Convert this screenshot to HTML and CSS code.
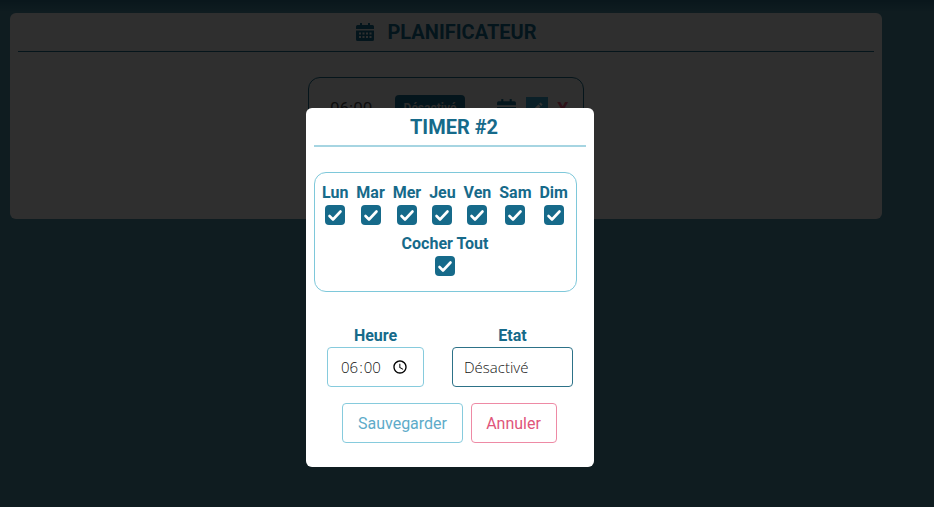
FILE: index.html
```html
<!DOCTYPE html>
<html lang="fr">
<head>
    <meta charset="UTF-8">
    <meta name="viewport" content="width=device-width, initial-scale=1.0">
    <title>Planificateur</title>
    <link rel="stylesheet" href="styles.css">
</head>
<body>

    <svg width="0" height="0" class="defs">
        <symbol id="calendar" viewBox="0 0 20 20">
            <path d="M1 7V4.500A1.500 1.500 0 0 1 2.500 3H5V1h2v2h6V1h2v2h2.500A1.500 1.500 0 0 1 19 4.500V7z"/>
            <path fill-rule="evenodd" d="M1 8.500h18v9A1.500 1.500 0 0 1 17.500 19h-15A1.500 1.500 0 0 1 1 17.500zM4 10.500v2h2v-2zM7.500 10.500v2h2v-2zM11 10.500v2h2v-2zM14.500 10.500v2h2v-2zM4 14v2h2v-2zM7.500 14v2h2v-2zM11 14v2h2v-2zM14.500 14v2h2v-2z"/>
        </symbol>
        <symbol id="check" viewBox="0 0 20 20">
            <path d="M4.500 11l3.500 3.500 7.500-8" fill="none" stroke="#fff" stroke-width="2.600" stroke-linecap="round" stroke-linejoin="round"/>
        </symbol>
    </svg>

    <div class="card">
        <h1 class="card-title">
            <svg class="title-icon"><use href="#calendar"/></svg>
            PLANIFICATEUR
        </h1>
        <div class="timer-row">
            <span class="timer-time">06:00</span>
            <span class="timer-badge">Désactivé</span>
            <div class="timer-actions">
                <svg class="timer-icon"><use href="#calendar"/></svg>
                <span class="timer-edit">
                    <svg viewBox="0 0 20 20" width="14" height="14"><path d="M3 17l1-4 8-8 3 3-8 8zM13 4l2-2 3 3-2 2z"/></svg>
                </span>
                <span class="timer-delete">X</span>
            </div>
        </div>
    </div>

    <div class="overlay">
        <div class="modal">
            <h2 class="modal-title">TIMER #2</h2>

            <div class="days-box">
                <div class="days">
                    <div class="day">Lun<span class="checkbox"><svg><use href="#check"/></svg></span></div>
                    <div class="day">Mar<span class="checkbox"><svg><use href="#check"/></svg></span></div>
                    <div class="day">Mer<span class="checkbox"><svg><use href="#check"/></svg></span></div>
                    <div class="day">Jeu<span class="checkbox"><svg><use href="#check"/></svg></span></div>
                    <div class="day">Ven<span class="checkbox"><svg><use href="#check"/></svg></span></div>
                    <div class="day">Sam<span class="checkbox"><svg><use href="#check"/></svg></span></div>
                    <div class="day">Dim<span class="checkbox"><svg><use href="#check"/></svg></span></div>
                </div>
                <div class="day check-all">Cocher Tout<span class="checkbox"><svg><use href="#check"/></svg></span></div>
            </div>

            <div class="fields">
                <div class="field field-time">
                    <label for="timeInput">Heure</label>
                    <input id="timeInput" class="time-input" type="time" value="06:00">
                </div>
                <div class="field field-state">
                    <label for="stateInput">Etat</label>
                    <select id="stateInput" class="state-input">
                        <option>Désactivé</option>
                        <option>Activé</option>
                    </select>
                </div>
            </div>

            <div class="buttons">
                <button class="btn btn-save">Sauvegarder</button>
                <button class="btn btn-cancel">Annuler</button>
            </div>
        </div>
    </div>

</body>
</html>
```

FILE: styles.css
```css
* {
    box-sizing: border-box;
}
body {
    margin: 0;
    height: 507px;
    overflow: hidden;
    padding: 13px 52px 0 10px;
    background: linear-gradient(#32738a, #4b8ca0 12px);
    font-family: Roboto, sans-serif;
}
.defs {
    position: absolute;
}
.card {
    height: 206px;
    background-color: #ececec;
    border-radius: 6px;
    padding: 0 8px;
}
.card-title {
    display: flex;
    justify-content: center;
    align-items: center;
    gap: 12px;
    height: 39px;
    margin: 0;
    border-bottom: 1px solid #1a6985;
    color: #166a8a;
    font-size: 20px;
    font-weight: 700;
}
.title-icon {
    width: 20px;
    height: 20px;
    fill: #166a8a;
}
.timer-row {
    display: flex;
    align-items: center;
    width: 276px;
    height: 70px;
    margin: 25px auto 0;
    padding: 0 13px 8px 21px;
    border: 1px solid #1a6985;
    border-radius: 12px;
}
.timer-time {
    font-size: 17px;
    color: #444;
    width: 65px;
}
.timer-badge {
    width: 70px;
    background-color: #166a8a;
    color: #ddd;
    font-size: 12px;
    font-weight: 700;
    text-align: center;
    padding: 6px 0;
    border-radius: 4px;
}
.timer-actions {
    display: flex;
    align-items: center;
    gap: 9px;
    margin-left: 31px;
}
.timer-icon {
    width: 21px;
    height: 21px;
    fill: #166a8a;
}
.timer-edit {
    display: flex;
    align-items: center;
    justify-content: center;
    width: 22px;
    height: 22px;
    background-color: #3aa0c8;
    fill: #fff;
}
.timer-delete {
    color: #e0557a;
    font-size: 18px;
    font-weight: 700;
}
.overlay {
    position: fixed;
    inset: 0;
    background-color: rgba(0, 0, 0, 0.8);
}
.modal {
    position: absolute;
    left: 306px;
    top: 108px;
    width: 288px;
    height: 359px;
    padding: 8px;
    background-color: #fff;
    border-radius: 6px;
}
.modal-title {
    height: 31px;
    margin: 0;
    border-bottom: 2px solid #a6d5e2;
    color: #166a8a;
    font-size: 20px;
    font-weight: 700;
    line-height: 22px;
    text-align: center;
    padding-left: 8px;
}
.days-box {
    width: 263px;
    height: 120px;
    margin-top: 25px;
    padding: 11px 8px 0 7px;
    border: 1px solid #7ec8da;
    border-radius: 12px;
}
.days {
    display: flex;
    justify-content: space-between;
}
.day {
    display: flex;
    flex-direction: column;
    align-items: center;
    color: #166a8a;
    font-size: 16px;
    font-weight: 700;
    line-height: 18px;
}
.checkbox {
    width: 20px;
    height: 20px;
    margin-top: 3px;
    background-color: #166a8a;
    border-radius: 4px;
}
.checkbox svg {
    display: block;
    width: 20px;
    height: 20px;
}
.check-all {
    margin-top: 10px;
}
.fields {
    display: flex;
    margin-top: 35px;
    padding-left: 13px;
}
.field {
    display: flex;
    flex-direction: column;
    align-items: center;
    color: #166a8a;
    font-size: 16px;
    font-weight: 700;
}
.field label {
    line-height: 18px;
    margin-bottom: 2px;
}
.time-input, .state-input {
    height: 40px;
    background-color: #fff;
    color: #111;
    font-family: "Open Sans", sans-serif;
    font-size: 15px;
    font-weight: 300;
    border-radius: 4px;
    outline: none;
}
.time-input {
    width: 97px;
    padding: 0 12px;
    border: 1px solid #86cbdd;
}
.field-state {
    margin-left: 28px;
}
.state-input {
    width: 121px;
    padding: 0 11px;
    border: 1px solid #2d7288;
    appearance: none;
}
.buttons {
    display: flex;
    justify-content: center;
    gap: 8px;
    margin-top: 16px;
    padding-right: 2px;
}
.btn {
    height: 40px;
    padding: 0;
    background-color: #fff;
    font-family: Roboto, sans-serif;
    font-size: 16px;
    border-radius: 4px;
}
.btn-save {
    width: 121px;
    padding-left: 1px;
    color: #5eabc9;
    border: 1px solid #86cbdd;
}
.btn-cancel {
    width: 86px;
    color: #e0557a;
    border: 1px solid #ee8aa5;
}
```
